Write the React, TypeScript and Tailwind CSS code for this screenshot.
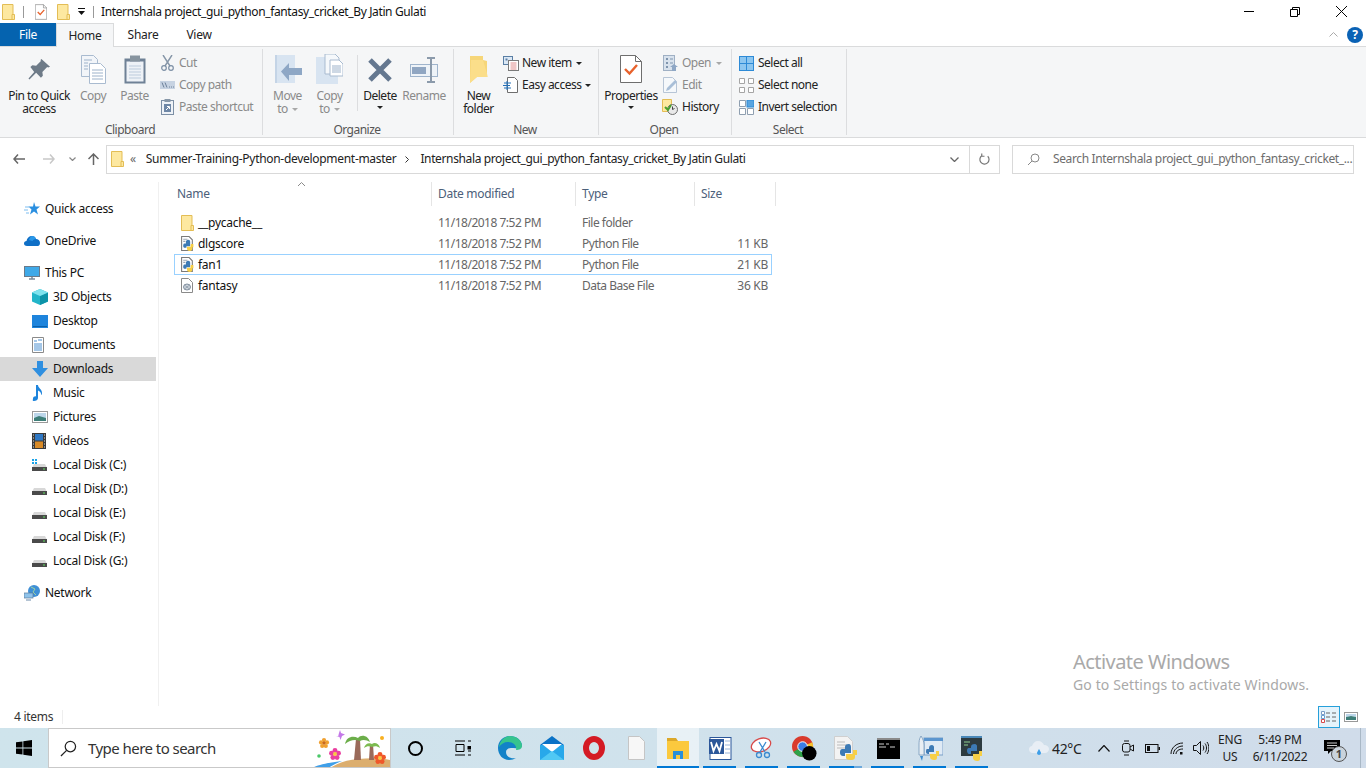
import type { ReactNode } from "react";

const F = "[font-family:'Noto_Sans',sans-serif]";

function Folder({ className = "w-[13px] h-[16px]" }: { className?: string }) {
  return (
    <svg viewBox="0 0 13 16" className={className}>
      <path d="M.5.5h10.5v15H.5z" fill="#fde8a0" stroke="#e3bd55" />
      <path d="M10 10.500h2.500v5H10z" fill="#fde8a0" stroke="#e3bd55" />
    </svg>
  );
}

function CheckDoc({ className }: { className: string }) {
  return (
    <svg viewBox="0 0 22 28" className={className}>
      <path d="M.5.5h15l6 6v21H.5z" fill="#fff" stroke="#6e6e6e" />
      <path d="M15.500.5v6h6" fill="none" stroke="#6e6e6e" />
      <path d="M5 14l4.500 4.500L17 10" fill="none" stroke="#e8622c" strokeWidth="2.400" />
    </svg>
  );
}

function PyFile() {
  return (
    <svg viewBox="0 0 12 14" className="w-[13px] h-[15px]">
      <path d="M.5.5h7l3 3v10H.5z" fill="#fff" stroke="#7a7a7a" />
      <path d="M2 3h4M2 5h2" stroke="#9aa5b1" />
      <path d="M7 3.500c-2 0-2.500 1-2.500 2V7H3C2 7 2 9 2 9.500S2.500 11 3.500 11H5V9.500h3.500V5.500c0-1-.5-2-1.500-2z" fill="#3d7ab5" />
      <path d="M8 14c2 0 2.500-1 2.500-2v-1.500h1V7.500H9V10H5.500v2c0 1 1 2 2.500 2z" fill="#f7cf47" />
    </svg>
  );
}

function DbFile() {
  return (
    <svg viewBox="0 0 12 15" className="w-[12px] h-[15px]">
      <path d="M.5.5h7l4 4v10H.5z" fill="#fff" stroke="#8a8a8a" />
      <ellipse cx="6" cy="9" rx="3.500" ry="3" fill="#cfd6dd" stroke="#8391a0" />
      <path d="M3.500 7l5 4M8.500 7l-5 4" stroke="#8391a0" strokeWidth=".7" />
    </svg>
  );
}

function Caret({ dim = false, className = "" }: { dim?: boolean; className?: string }) {
  return (
    <svg viewBox="0 0 6 3" className={`w-[6px] h-[3px] ${className}`}>
      <path d="M0 0h6L3 3z" fill={dim ? "#a8a8a8" : "#222"} />
    </svg>
  );
}

function Big({
  w,
  icon,
  lines,
  off = false,
  inlineCaret = false,
  underCaret = false,
}: {
  w: string;
  icon: ReactNode;
  lines: string[];
  off?: boolean;
  inlineCaret?: boolean;
  underCaret?: boolean;
}) {
  return (
    <div className={`${w} flex flex-col items-center shrink-0`}>
      <div className="h-[40px] flex items-center justify-center">{icon}</div>
      <div className={`text-center leading-[13px] whitespace-nowrap ${off ? "text-[#8a8a8a]" : "text-[#222]"}`}>
        {lines.map((l, i) => (
          <div key={l}>
            {l}
            {inlineCaret && i === lines.length - 1 && <Caret dim className="inline-block ml-[4px] align-middle" />}
          </div>
        ))}
        {underCaret && (
          <div className="flex justify-center mt-[4px]">
            <Caret />
          </div>
        )}
      </div>
    </div>
  );
}

function Small({
  icon,
  label,
  off = false,
  caret,
}: {
  icon: ReactNode;
  label: string;
  off?: boolean;
  caret?: ReactNode;
}) {
  return (
    <div className="h-[22px] flex items-center whitespace-nowrap">
      <div className="w-[19px] flex justify-start shrink-0">{icon}</div>
      <span className={off ? "text-[#8a8a8a]" : "text-[#222]"}>{label}</span>
      {caret}
    </div>
  );
}

function Group({ w, label, children }: { w: string; label: string; children: ReactNode }) {
  return (
    <div className={`${w} shrink-0 flex flex-col border-r border-[#dcdddf] h-[86px] mt-[2px]`}>
      <div className="flex-1 flex">{children}</div>
      <div className="h-[14px] pr-[2px] text-center text-[#555] leading-[17px]">{label}</div>
    </div>
  );
}

function Ribbon() {
  return (
    <div className="h-[92px] bg-[#f5f6f7] border-b border-t border-[#dadbdc] flex text-[12px] tracking-[-0.5px] shrink-0">
      <Group w="w-[263px]" label="Clipboard">
        <Big
          w="w-[78px]"
          lines={["Pin to Quick", "access"]}
          icon={
            <svg viewBox="0 0 24 24" className="w-[23px] h-[23px] mt-[1px]">
              <path d="M14 1l9 8-2 1-1-.500-5 5 .500 4-2 2-5-5-7 7-1-1 6-7-4-5 2-2 4 .500 5-5-.500-1z" fill="#6e7b88" />
            </svg>
          }
        />
        <Big
          w="w-[30px]"
          off
          lines={["Copy"]}
          icon={
            <svg viewBox="0 0 25 29" className="w-[25px] h-[29px]">
              <path d="M.5.5h12l4 4v17H.5z" fill="#f2f5f9" stroke="#a9bbd0" />
              <path d="M8.500 8.500h11l5 5v15h-16z" fill="#fff" stroke="#a9bbd0" />
              <path d="M3 5h8M3 8h4M3 11h4M3 14h4M11 15h11M11 18h11M11 21h11M11 24h11" stroke="#9db2ca" />
            </svg>
          }
        />
        <Big
          w="w-[53px]"
          off
          lines={["Paste"]}
          icon={
            <svg viewBox="0 0 22 29" className="w-[22px] h-[29px]">
              <rect x=".5" y="3.500" width="21" height="25" fill="#6f8196" />
              <rect x="2.500" y="6.500" width="17" height="20" fill="#eef2f7" />
              <rect x="6" y=".5" width="10" height="6" fill="#87949f" />
              <path d="M5 11h12M5 14h12M5 17h12M5 20h12M5 23h12" stroke="#bccbdc" />
            </svg>
          }
        />
        <div className="flex flex-col pt-[3px] -ml-[1px]">
          <Small
            off
            label="Cut"
            icon={
              <svg viewBox="0 0 13 16" className="w-[13px] h-[16px] ml-[1px]">
                <path d="M2 0l7 11M11 0L4 11" stroke="#8696a8" strokeWidth="1.400" />
                <circle cx="3" cy="13" r="2.300" fill="none" stroke="#7c8fa5" strokeWidth="1.200" />
                <circle cx="10" cy="13" r="2.300" fill="none" stroke="#7c8fa5" strokeWidth="1.200" />
              </svg>
            }
          />
          <Small
            off
            label="Copy path"
            icon={
              <svg viewBox="0 0 15 8" className="w-[15px] h-[8px]">
                <rect width="15" height="8" fill="#c7d3e2" />
                <path d="M2 1.500l2 5M5 1.500l2 5" stroke="#6d819a" />
                <path d="M9 6h1M11 6h1M13 6h1" stroke="#6d819a" />
              </svg>
            }
          />
          <Small
            off
            label="Paste shortcut"
            icon={
              <svg viewBox="0 0 13 16" className="w-[13px] h-[16px] ml-[1px]">
                <rect x=".5" y="1.500" width="12" height="14" fill="#eef2f7" stroke="#7c8fa5" />
                <rect x="3.500" y="0" width="6" height="3" fill="#8797a8" />
                <rect x="3" y="5" width="7" height="8" fill="#6e87a6" />
                <path d="M5 11l3-3M6 7.500h2.500V10" stroke="#fff" fill="none" />
              </svg>
            }
          />
        </div>
      </Group>

      <Group w="w-[191px]" label="Organize">
        <Big
          w="w-[49px]"
          off
          inlineCaret
          lines={["Move", "to"]}
          icon={
            <svg viewBox="0 0 27 28" className="w-[27px] h-[28px] ml-[2px]">
              <path d="M0 0h20v28H0z" fill="#d8e4f1" />
              <path d="M0 0h2v28H0z" fill="#c4d4e6" />
              <path d="M27 13v7H14v6L6 16.500 14 8v5z" fill="#8ea7c5" />
            </svg>
          }
        />
        <Big
          w="w-[35px]"
          off
          inlineCaret
          lines={["Copy", "to"]}
          icon={
            <svg viewBox="0 0 27 30" className="w-[27px] h-[30px]">
              <path d="M0 3h22v27H0z" fill="#d8e4f1" />
              <path d="M9 0h10l4 4v16H9z" fill="#f5f8fb" stroke="#a9bbd0" />
              <path d="M14 6h9l4 4v12H14z" fill="#fff" stroke="#a9bbd0" />
              <path d="M16 12h9M16 14h9M16 16h9M16 18h9" stroke="#9db2ca" />
            </svg>
          }
        />
        <div className="w-[1px] h-[56px] bg-[#dcdddf] ml-[10px] mt-[6px] shrink-0" />
        <Big
          w="w-[44px]"
          underCaret
          lines={["Delete"]}
          icon={
            <svg viewBox="0 0 26 26" className="w-[26px] h-[26px] mt-[1px]">
              <path d="M3 3l20 20M23 3L3 23" stroke="#64778f" strokeWidth="5" />
            </svg>
          }
        />
        <Big
          w="w-[44px]"
          off
          lines={["Rename"]}
          icon={
            <svg viewBox="0 0 28 26" className="w-[28px] h-[26px] mt-[1px]">
              <rect x=".5" y="7.500" width="27" height="12" fill="#eef3f8" stroke="#9fb4cc" />
              <rect x="2" y="10" width="14" height="7" fill="#90a6c2" />
              <path d="M17 1h8M21 1v24M17 25h8" stroke="#8b9aab" strokeWidth="2" fill="none" />
            </svg>
          }
        />
      </Group>

      <Group w="w-[145px]" label="New">
        <Big
          w="w-[49px]"
          lines={["New", "folder"]}
          icon={
            <svg viewBox="0 0 20 27" className="w-[20px] h-[27px]">
              <path d="M1 0h13v4l4 1v16H8l-7 6z" fill="#f6d679" />
              <path d="M14 4l5 17H8l-7 6 1-23z" fill="#fde08f" opacity=".8" />
            </svg>
          }
        />
        <div className="flex flex-col pt-[3px]">
          <Small
            label="New item"
            caret={<Caret className="ml-[4px]" />}
            icon={
              <svg viewBox="0 0 16 15" className="w-[16px] h-[15px]">
                <rect x=".5" y=".5" width="9" height="8" fill="#dbe8f5" stroke="#5a7fa5" />
                <path d="M2.500 2.500h2v2h-2z" fill="#5a7fa5" />
                <rect x="5.500" y="4.500" width="10" height="10" fill="#fff" stroke="#7a7a7a" />
                <path d="M7.500 7h6M7.500 9h6M7.500 11h6M7.500 13h6" stroke="#e08c8c" />
              </svg>
            }
          />
          <Small
            label="Easy access"
            caret={<Caret className="ml-[4px]" />}
            icon={
              <svg viewBox="0 0 15 16" className="w-[15px] h-[16px]">
                <path d="M4.500.5h7l3 3v12h-10z" fill="#fff" stroke="#6e6e6e" />
                <path d="M1 6h7M0 8.500h7M1 11h7" stroke="#2470b8" />
                <path d="M4 4v9" stroke="#2470b8" />
              </svg>
            }
          />
        </div>
      </Group>

      <Group w="w-[133px]" label="Open">
        <Big w="w-[64px]" underCaret lines={["Properties"]} icon={<CheckDoc className="w-[22px] h-[28px]" />} />
        <div className="flex flex-col pt-[3px]">
          <Small
            off
            label="Open"
            caret={<Caret dim className="ml-[5px]" />}
            icon={
              <svg viewBox="0 0 15 16" className="w-[15px] h-[16px]">
                <rect x=".5" y=".5" width="11" height="15" fill="#d8e2ed" stroke="#9fb0c4" />
                <path d="M3 3h2v2H3zM3 7h2v2H3zM3 11h2v2H3z" fill="#7f95ae" />
                <path d="M7 4h3M7 8h3" stroke="#7f95ae" />
                <path d="M11 9l4 3h-2v4h-4v-4H7z" fill="#8ea7c5" />
              </svg>
            }
          />
          <Small
            off
            label="Edit"
            icon={
              <svg viewBox="0 0 14 16" className="w-[14px] h-[16px]">
                <path d="M.5.5h9l4 4v11H.5z" fill="#f5f8fb" stroke="#b7c5d6" />
                <path d="M3 14l1-3 8-8 2 2-8 8z" fill="#a9bfd8" />
              </svg>
            }
          />
          <Small
            label="History"
            icon={
              <svg viewBox="0 0 16 16" className="w-[16px] h-[16px] -ml-[1px]">
                <path d="M.5.5h9v12h-9z" fill="#fde8a0" stroke="#e3bd55" />
                <circle cx="10.500" cy="10.500" r="5" fill="#e9e9e9" stroke="#6e6e6e" />
                <path d="M10.500 7.500v3l2-1" stroke="#444" fill="none" />
                <path d="M3 8l3 3 3-5" stroke="#4aa02c" strokeWidth="2" fill="none" />
              </svg>
            }
          />
        </div>
      </Group>

      <Group w="w-[115px]" label="Select">
        <div className="flex flex-col pt-[3px] pl-[7px]">
          <Small
            label="Select all"
            icon={
              <svg viewBox="0 0 15 15" className="w-[15px] h-[15px]">
                <rect width="15" height="15" fill="#2d8ad6" />
                <path d="M1 1h6v6H1zM8 1h6v6H8zM1 8h6v6H1zM8 8h6v6H8z" fill="#8cc6f0" />
              </svg>
            }
          />
          <Small
            label="Select none"
            icon={
              <svg viewBox="0 0 15 15" className="w-[15px] h-[15px]">
                <path d="M.5.5h5v5h-5zM9.500.5h5v5h-5zM.5 9.500h5v5h-5zM9.500 9.500h5v5h-5z" fill="#fff" stroke="#a5a5a5" />
              </svg>
            }
          />
          <Small
            label="Invert selection"
            icon={
              <svg viewBox="0 0 15 15" className="w-[15px] h-[15px]">
                <path d="M.5 8.500h6v6h-6zM8.500 8.500h6v6h-6zM.5.5h6v6h-6z" fill="#fff" stroke="#8f9fb0" />
                <rect x="8" y="0" width="7" height="7" fill="#5aa5e0" stroke="#2d8ad6" />
              </svg>
            }
          />
        </div>
      </Group>
    </div>
  );
}

const tree = [
  { label: "3D Objects", icon: <svg viewBox="0 0 16 16" className="w-4 h-4"><path d="M8 0l8 3.500v9L8 16 0 12.500v-9z" fill="#22b5c9" /><path d="M8 7v9l8-3.500v-9z" fill="#0d93a8" /><path d="M8 0l8 3.500L8 7 0 3.500z" fill="#7fe3ee" /></svg> },
  { label: "Desktop", icon: <svg viewBox="0 0 16 13" className="w-4 h-[13px]"><rect width="16" height="13" fill="#1e84dc" /><rect x="1" y="11" width="14" height="1" fill="#0c5fa8" /></svg> },
  { label: "Documents", icon: <svg viewBox="0 0 12 16" className="w-3 h-4"><path d="M.5.5h11v15H.5z" fill="#fff" stroke="#8a8a8a" /><path d="M2 4h3M6 3h4M2 7h8M2 9h8M2 11h8M2 13h8" stroke="#4a8fd0" /></svg> },
  { label: "Downloads", icon: <svg viewBox="0 0 16 16" className="w-4 h-4"><path d="M5 0h6v7h5l-8 9-8-9h5z" fill="#2f8fe0" /></svg> },
  { label: "Music", icon: <svg viewBox="0 0 12 16" className="w-3 h-4"><path d="M4 0h2c0 3 4 4 4 8 0 1-.5 2-1 2 .5-2-1-4-3-4.500V13c0 2-2 3-4 3S1 15 1 13.500 3 11 4 11.500z" fill="#1e84dc" /></svg> },
  { label: "Pictures", icon: <svg viewBox="0 0 16 12" className="w-4 h-3"><rect x=".5" y=".5" width="15" height="11" fill="#fff" stroke="#9a9a9a" /><rect x="2" y="2" width="12" height="8" fill="#bcd6ea" /><path d="M2 7l5-2 7 2v3H2z" fill="#3d7e78" /></svg> },
  { label: "Videos", icon: <svg viewBox="0 0 14 16" className="w-[14px] h-4"><rect width="14" height="16" fill="#3a3a3a" /><rect x="3" y="1" width="8" height="6.500" fill="#2f78c4" /><rect x="3" y="8.500" width="8" height="6.500" fill="#d98a26" /><path d="M1 2h1M1 5h1M1 8h1M1 11h1M1 14h1M12 2h1M12 5h1M12 8h1M12 11h1M12 14h1" stroke="#ddd" /></svg> },
];

function Disk({ sys = false }: { sys?: boolean }) {
  return (
    <svg viewBox="0 0 15 12" className="w-[15px] h-[12px]">
      {sys && <path d="M0 0h2v2H0zM3 0h2v2H3zM0 3h2v2H0zM3 3h2v2H3z" fill="#19a3e8" />}
      <path d="M2 5h11l2 4H0z" fill="#d8d8d8" />
      <rect y="8" width="15" height="4" fill="#4a4a4a" />
      <rect x="11" y="9.500" width="2" height="1" fill="#5fe05f" />
    </svg>
  );
}

const disks = ["C", "D", "E", "F", "G"];

function NavRow({ icon, label, sub = false, active = false }: { icon: ReactNode; label: string; sub?: boolean; active?: boolean }) {
  return (
    <div className={`h-[24px] w-[156px] flex items-center ${active ? "bg-[#d9d9d9]" : ""}`}>
      <div className={`${sub ? "ml-[32px] w-[21px]" : "ml-[24px] w-[21px]"} flex items-center shrink-0`}>{icon}</div>
      <span className="text-[#111]">{label}</span>
    </div>
  );
}

function NavPane() {
  return (
    <div className="w-[159px] shrink-0 border-r border-[#f0f0f0] pt-[15px] flex flex-col text-[12px] tracking-[-0.28px]">
      <NavRow
        label="Quick access"
        icon={
          <svg viewBox="0 0 16 16" className="w-4 h-4">
            <path d="M10 1l1.500 4.500H16l-3.500 3 1.500 5-4-3-4 3 1.500-5-3-3h4.500z" fill="#2a8fe0" />
            <path d="M1 6h4M0 9h4M2 12h3" stroke="#7dbdf0" />
          </svg>
        }
      />
      <div className="h-[8px]" />
      <NavRow
        label="OneDrive"
        icon={
          <svg viewBox="0 0 16 10" className="w-4 h-[10px]">
            <path d="M3 10C1 10 0 9 0 7.500S1 5 2.500 5C3 2 5 0 8 0c2 0 3.500 1 4 3 2 0 4 1.500 4 4s-1.500 3-3 3z" fill="#0f6fc6" />
            <path d="M8 0c2 0 3.500 1 4 3-2 0-3 1-3.500 2L5 4C5.500 2 6.500.5 8 0z" fill="#2a97e8" />
          </svg>
        }
      />
      <div className="h-[8px]" />
      <NavRow
        label="This PC"
        icon={
          <svg viewBox="0 0 16 15" className="w-4 h-[15px]">
            <rect x=".5" y=".5" width="15" height="10" fill="#3fa9e8" stroke="#6a7a8a" />
            <path d="M5 13h6M8 11v2" stroke="#7a8a9a" strokeWidth="1.500" />
          </svg>
        }
      />
      {tree.map((t) => (
        <NavRow key={t.label} sub icon={t.icon} label={t.label} active={t.label === "Downloads"} />
      ))}
      {disks.map((d) => (
        <NavRow key={d} sub icon={<Disk sys={d === "C"} />} label={`Local Disk (${d}:)`} />
      ))}
      <div className="h-[8px]" />
      <NavRow
        label="Network"
        icon={
          <svg viewBox="0 0 16 16" className="w-4 h-4">
            <circle cx="10" cy="6" r="6" fill="#3f8fd6" />
            <path d="M7 2l4 2-2 3 3 3" stroke="#9fd3a0" fill="none" />
            <rect x="0" y="8" width="9" height="5" fill="#8fc3ea" stroke="#5a7a9a" strokeWidth=".7" />
            <path d="M2 15h5" stroke="#6a8aaa" />
          </svg>
        }
      />
    </div>
  );
}

const files = [
  { name: "__pycache__", type: "File folder", size: "", icon: <Folder /> },
  { name: "dlgscore", type: "Python File", size: "11 KB", icon: <PyFile /> },
  { name: "fan1", type: "Python File", size: "21 KB", icon: <PyFile />, sel: true },
  { name: "fantasy", type: "Data Base File", size: "36 KB", icon: <DbFile /> },
];

function FileList() {
  return (
    <div className="flex-1 relative text-[12px] tracking-[-0.28px]">
      <div className="h-[24px] flex text-[#4c607a]">
        <div className="w-[273px] border-r border-[#e5e5e5] pl-[18px] leading-[24px]">Name</div>
        <div className="w-[144px] border-r border-[#e5e5e5] pl-[6px] leading-[24px]">Date modified</div>
        <div className="w-[119px] border-r border-[#e5e5e5] pl-[6px] leading-[24px]">Type</div>
        <div className="w-[81px] border-r border-[#e5e5e5] pl-[6px] leading-[24px]">Size</div>
      </div>
      <svg viewBox="0 0 7 4" className="w-[7px] h-[4px] absolute left-[139px] top-0">
        <path d="M0 4l3.500-3.500L7 4" fill="none" stroke="#8a8a8a" />
      </svg>
      <div className="pt-[6px] pl-[15px]">
        {files.map((f) => (
          <div
            key={f.name}
            className={`h-[21px] w-[598px] flex items-center ${f.sel ? "border border-[#99d1ff]" : "border border-transparent"}`}
          >
            <div className="w-[257px] pl-[6px] flex items-center shrink-0">
              <div className="w-[17px] shrink-0 flex">{f.icon}</div>
              <span className="text-[#111]">{f.name}</span>
            </div>
            <div className="w-[144px] pl-[6px] text-[#666] tracking-[-0.5px] shrink-0">11/18/2018 7:52 PM</div>
            <div className="w-[119px] pl-[6px] text-[#666] tracking-[-0.5px] shrink-0">{f.type}</div>
            <div className="w-[73px] text-right text-[#666] shrink-0">{f.size}</div>
          </div>
        ))}
      </div>
    </div>
  );
}

function TaskBtn({ children, on = false, part = false }: { children: ReactNode; on?: boolean; part?: boolean }) {
  return (
    <div className={`w-[42px] h-full relative flex items-center justify-center shrink-0 ${on ? "bg-white/50" : ""}`}>
      {children}
      <div className={`absolute bottom-0 h-[2px] bg-[#0078d4] ${on ? "left-0 right-0" : "left-[4px] right-[5px]"}`} />
      {part && <div className="absolute bottom-0 h-[2px] right-[5px] w-[8px] bg-[#6ca9dc]" />}
    </div>
  );
}

function Flower({ x, y, r, petal, core }: { x: number; y: number; r: number; petal: string; core: string }) {
  return (
    <g>
      <circle cx={x} cy={y - r} r={r * 0.7} fill={petal} />
      <circle cx={x + r} cy={y - r * 0.2} r={r * 0.7} fill={petal} />
      <circle cx={x + r * 0.6} cy={y + r} r={r * 0.7} fill={petal} />
      <circle cx={x - r * 0.6} cy={y + r} r={r * 0.7} fill={petal} />
      <circle cx={x - r} cy={y - r * 0.2} r={r * 0.7} fill={petal} />
      <circle cx={x} cy={y} r={r * 0.55} fill={core} />
    </g>
  );
}

function Taskbar() {
  return (
    <div className="h-[40px] bg-gradient-to-r from-[#cfe4ec] via-[#d0e2ec] to-[#d0dcea] flex items-center text-[#111] shrink-0">
      <div className="w-[48px] flex justify-center shrink-0">
        <svg viewBox="0 0 16 16" className="w-4 h-4">
          <path d="M0 2.300l6.500-.9v6.200H0zM7.300 1.300L16 0v7.600H7.300zM0 8.400h6.500v6.200L0 13.700zM7.300 8.400H16V16l-8.700-1.300z" fill="#000" />
        </svg>
      </div>
      <div className="w-[343px] h-full shrink-0 bg-white border border-[#c9c9c9] flex items-center relative overflow-hidden">
        <svg viewBox="0 0 18 18" className="w-[17px] h-[17px] ml-[11px] shrink-0">
          <circle cx="11" cy="7" r="5.500" fill="none" stroke="#222" strokeWidth="1.300" />
          <path d="M7 11l-6 6" stroke="#222" strokeWidth="1.300" />
        </svg>
        <span className="ml-[11px] text-[15px] tracking-[-0.55px] text-[#333]">Type here to search</span>
        <svg viewBox="0 0 76 39" className="absolute right-0 top-0 w-[76px] h-[39px]">
          <path d="M16 39c8-5 16-8 28-9 12-1 24-1 32 1v8z" fill="#dcae6e" />
          <path d="M-2 39c6-3 14-5 30-7-6 2-10 5-14 7z" fill="#3f9fe8" />
          <path d="M40 31l2-21h4l1 21z" fill="#9a6a5a" />
          <path d="M55 31l1-16h3l1 16z" fill="#9a6a5a" />
          <path d="M31 15c1-7 8-9 13-6 3-4 10-3 12 4-3-2-7-3-10-1-5-2-10-1-15 3z" fill="#6cae4a" />
          <path d="M50 19c1-4 5-6 8-4 2-2 7-1 8 4-3-2-5-2-8-1-3-1-5-1-8 1z" fill="#7cba50" />
          <Flower x={21} y={25} r={3.500} petal="#ea3fa0" core="#f8c840" />
          <Flower x={10} y={14} r={3} petal="#f0a030" core="#c86a20" />
          <Flower x={66} y={29} r={3.500} petal="#f0582a" core="#f8c840" />
          <path d="M24 8l1-4 1-3 1 3 4 1.500-3 1.500-1.500 4-1-3-3.500-1z" fill="#c478e8" />
          <circle cx="68" cy="9" r="2" fill="#f8b020" />
          <circle cx="5" cy="27" r="1.800" fill="#4ac868" />
        </svg>
      </div>
      <div className="w-[48px] flex justify-center shrink-0">
        <div className="w-[15px] h-[15px] rounded-full border-[2.5px] border-black" />
      </div>
      <div className="w-[50px] flex justify-center shrink-0">
        <svg viewBox="0 0 16 16" className="w-4 h-4 -ml-[3px]">
          <path d="M0 1h10M0 15h10M1 4.500h8v7H1z" fill="none" stroke="#000" />
          <path d="M13 1h3M13 15h3M13 11h3" stroke="#000" />
          <rect x="12.500" y="6" width="3.500" height="3.500" fill="#000" />
        </svg>
      </div>
      <div className="w-[42px] flex justify-center shrink-0">
        <svg viewBox="0 0 24 24" className="w-[24px] h-[24px]">
          <path d="M12 0C5 0 0 5 0 12c0 7 5 12 11 12 3 0 5-1 7-2-5 1-10-1-10-6 0-2 2-4 5-4 4 0 9 1 11-2C24 4 18 0 12 0z" fill="#1282c8" />
          <path d="M12 0c6 0 12 4 12 10 0 3-3 4-6 4 1-4-2-8-8-8-4 0-7 2-9 5C2 5 6 0 12 0z" fill="#36c48e" />
        </svg>
      </div>
      <div className="w-[42px] flex justify-center shrink-0">
        <svg viewBox="0 0 24 24" className="w-[24px] h-[24px]">
          <path d="M0 9l12-9 12 9v15H0z" fill="#0a72c6" />
          <path d="M0 9h24v15H0z" fill="#28a8ea" />
          <path d="M2 8h20l-10 8z" fill="#fff" />
          <path d="M0 24l12-9 12 9z" fill="#50c8f4" />
        </svg>
      </div>
      <div className="w-[42px] flex justify-center shrink-0">
        <div className="w-[22px] h-[24px] rounded-[50%] border-[6px] border-[#d41a24]" />
      </div>
      <div className="w-[42px] flex justify-center shrink-0">
        <svg viewBox="0 0 17 24" className="w-[17px] h-[24px]">
          <path d="M.5.5h11l5 5v18H.5z" fill="#f7f7f7" stroke="#c5c5c5" />
        </svg>
      </div>
      <TaskBtn on>
        <svg viewBox="0 0 22 21" className="w-[22px] h-[21px]">
          <path d="M0 0h9l2 3h11v6H0z" fill="#dca82a" />
          <path d="M0 3h22v18H0z" fill="#fbc93e" />
          <path d="M6 13h10v8h-3v-4H9v4H6z" fill="#2a8fd8" />
        </svg>
      </TaskBtn>
      <TaskBtn>
        <svg viewBox="0 0 23 23" className="w-[23px] h-[23px]">
          <rect x="1" y=".5" width="21" height="22" fill="#fff" stroke="#2b579a" />
          <path d="M16 4h5M16 8h5M16 12h5M16 16h5" stroke="#9ab5da" />
          <rect y="2" width="15" height="15" fill="#2b579a" />
          <path d="M2 5l2.500 9 3-7 3 7L13 5" fill="none" stroke="#fff" strokeWidth="1.800" />
        </svg>
      </TaskBtn>
      <TaskBtn>
        <svg viewBox="0 0 24 24" className="w-[24px] h-[24px]">
          <ellipse cx="11" cy="9" rx="10" ry="6.500" fill="#fff" stroke="#d84a4a" strokeWidth="1.300" transform="rotate(-20 11 9)" />
          <path d="M9 6l6 10M16 6l-6 10" stroke="#3a8ad0" strokeWidth="1.300" />
          <circle cx="9" cy="19" r="2.500" fill="none" stroke="#3a8ad0" strokeWidth="1.300" />
          <circle cx="17" cy="19" r="2.500" fill="none" stroke="#3a8ad0" strokeWidth="1.300" />
        </svg>
      </TaskBtn>
      <TaskBtn>
        <svg viewBox="0 0 26 26" className="w-[25px] h-[25px]">
          <circle cx="11" cy="11" r="11" fill="#d93a2c" />
          <path d="M11 11L1.500 16.500A11 11 0 0 0 14 21.500z" fill="#2ea24a" />
          <path d="M21 6.500A11 11 0 0 1 14 21.500L11 11z" fill="#f6c32c" />
          <circle cx="11" cy="11" r="5" fill="#3b7de6" stroke="#fff" />
          <circle cx="18" cy="18" r="7.500" fill="#000" />
        </svg>
      </TaskBtn>
      <TaskBtn part>
        <svg viewBox="0 0 24 25" className="w-[24px] h-[25px]">
          <path d="M.5.5h13l5 5v18H.5z" fill="#f3f3f3" stroke="#cfcfcf" />
          <path d="M3 6h8M3 9h10M3 12h8" stroke="#bbb" />
          <path d="M15 8c-3 0-4 1-4 3v2H8c-2 0-2 3-2 4s1 3 3 3h2v-3h6v-6c0-2-1-3-2-3z" fill="#3d7ab5" />
          <path d="M17 24c3 0 4-1 4-3v-2h2v-5h-4v4h-7v4c0 1 2 2 5 2z" fill="#f7cf47" />
        </svg>
      </TaskBtn>
      <TaskBtn>
        <svg viewBox="0 0 23 21" className="w-[23px] h-[21px]">
          <rect width="23" height="21" fill="#000" />
          <rect width="23" height="2" fill="#8a8a8a" />
          <path d="M2 6h5M9 6h3M2 9h7M13 9h5" stroke="#cfcfcf" />
        </svg>
      </TaskBtn>
      <TaskBtn>
        <svg viewBox="0 0 26 25" className="w-[26px] h-[25px]">
          <rect x="7" y="2" width="19" height="17" fill="#dfeaf5" stroke="#7aa0c8" />
          <rect x="7" y="2" width="19" height="3" fill="#5c96cf" />
          <path d="M4 0c2 3 3 6 3 9v10H2V9c0-3 0-6 2-9z" fill="#e9eef3" stroke="#6a8fb5" strokeWidth=".7" />
          <path d="M3 20h3l-1 5z" fill="#3a8ad0" />
          <path d="M15 9c-2 0-3 1-3 3v1h-2c-1 0-1 2-1 3s1 2 2 2h1v-2h5v-5c0-1-1-2-2-2z" fill="#3d7ab5" />
          <path d="M17 24c3 0 3-1 3-3v-1h2v-5h-3v3h-6v3c0 2 2 3 4 3z" fill="#f7cf47" />
        </svg>
      </TaskBtn>
      <TaskBtn>
        <svg viewBox="0 0 23 25" className="w-[23px] h-[25px]">
          <rect width="21" height="20" fill="#2d3b40" />
          <rect width="21" height="2" fill="#4a88b8" />
          <path d="M3 6h6M3 9h4" stroke="#8fd08f" />
          <path d="M14 8c-3 0-4 1-4 3v1H8c-2 0-2 2-2 3s1 3 2 3h2v-3h6v-5c0-1-1-2-2-2z" fill="#3d7ab5" />
          <path d="M16 25c3 0 3-1 3-3v-2h2v-5h-3v3h-6v4c0 2 2 3 4 3z" fill="#f7cf47" />
        </svg>
      </TaskBtn>

      <div className="w-[30px] shrink-0" />
      <div className="w-[28px] flex justify-center shrink-0">
        <svg viewBox="0 0 20 16" className="w-[20px] h-[16px] ml-[3px]">
          <path d="M4 13c-3 0-4-2-4-4s2-3 3-3c1-3 3-5 6-5s5 2 6 4c3 0 5 2 5 4s-2 4-4 4z" fill="#e8eef5" />
          <path d="M10 9c1 2 2 3 2 4s-1 2-2 2-2-1-2-2 1-2 2-4z" fill="#3f9fe8" />
        </svg>
      </div>
      <div className="w-[41px] shrink-0 pl-[1px] text-[14px] tracking-[-0.35px] text-[#222]">42°C</div>
      <div className="w-[24px] flex justify-center shrink-0">
        <svg viewBox="0 0 12 7" className="w-[12px] h-[7px]">
          <path d="M.5 6.500l5.500-6 5.500 6" fill="none" stroke="#111" strokeWidth="1.200" />
        </svg>
      </div>
      <div className="w-[24px] flex justify-center shrink-0">
        <svg viewBox="0 0 12 16" className="w-[12px] h-[16px]">
          <rect x=".5" y="3.500" width="7.500" height="8.500" rx="2" fill="none" stroke="#111" />
          <path d="M8 7l3.500-2v6L8 9M2 1h5M2 15h5" fill="none" stroke="#111" />
        </svg>
      </div>
      <div className="w-[24px] flex justify-center shrink-0">
        <svg viewBox="0 0 15 9" className="w-[15px] h-[9px]">
          <rect x=".5" y=".5" width="12.500" height="8" fill="none" stroke="#111" />
          <rect x="2" y="2" width="3" height="5" fill="#111" />
          <rect x="13.500" y="3" width="1.500" height="3" fill="#111" />
        </svg>
      </div>
      <div className="w-[25px] flex justify-center shrink-0">
        <svg viewBox="0 0 14 13" className="w-[14px] h-[13px]">
          <path d="M1 12C1 6 6 1 13 1M3.500 12c0-4 4-8 9.500-8M6 12c0-3 3-5 7-5" fill="none" stroke="#111" />
          <rect x="10" y="10" width="2.500" height="2.500" fill="#111" />
        </svg>
      </div>
      <div className="w-[23px] flex justify-center shrink-0">
        <svg viewBox="0 0 16 14" className="w-[16px] h-[14px]">
          <path d="M.5 4.500h3l4-4v13l-4-4h-3z" fill="none" stroke="#111" />
          <path d="M10 4.500c1 1.500 1 3.500 0 5M12 2.500c2 2.500 2 6.500 0 9M14 1c2.500 3.500 2.500 8.500 0 12" fill="none" stroke="#111" />
        </svg>
      </div>
      <div className="w-[36px] shrink-0 text-center text-[12px] tracking-[-0.25px] leading-[17px] text-[#222]">
        <div>ENG</div>
        <div>US</div>
      </div>
      <div className="w-[64px] shrink-0 text-center text-[12px] tracking-[-0.25px] leading-[17px] text-[#222]">
        <div>5:49 PM</div>
        <div>6/11/2022</div>
      </div>
      <div className="w-[40px] flex justify-center shrink-0 relative">
        <svg viewBox="0 0 16 14" className="w-[16px] h-[14px] -mt-[3px]">
          <path d="M0 0h16v11H7l-3 3v-3H0z" fill="#000" />
          <path d="M3 3h10M3 5.500h10M3 8h7" stroke="#fff" strokeWidth=".8" />
        </svg>
        <div className="absolute left-[19px] top-[3px] w-[16px] h-[16px] rounded-full bg-[#c9d3dc] border border-[#555] text-[11px] font-bold leading-[14px] text-center text-[#444]">
          1
        </div>
      </div>
      <div className="w-[1px] h-full ml-[8px] bg-[#a9b8c6]" />
    </div>
  );
}

export default function App() {
  return (
    <div className={`${F} relative w-[1366px] h-[768px] overflow-hidden bg-white flex flex-col`}>
      {/* title bar */}
      <div className="h-[23px] flex items-center text-[12px] tracking-[-0.37px] text-[#111] shrink-0">
        <div className="ml-[2px] flex"><Folder /></div>
        <div className="w-[1px] h-[12px] bg-[#999] ml-[8px]" />
        <div className="ml-[11px] flex"><CheckDoc className="w-[12px] h-[16px]" /></div>
        <div className="ml-[10px] flex"><Folder /></div>
        <svg viewBox="0 0 7 7" className="w-[7px] h-[7px] ml-[8px]">
          <path d="M0 0h7v1H0zM0 3h7L3.500 7z" fill="#111" />
        </svg>
        <div className="w-[1px] h-[12px] bg-[#999] ml-[8px]" />
        <span className="ml-[7px]">Internshala project_gui_python_fantasy_cricket_By Jatin Gulati</span>
        <div className="ml-auto flex items-center pr-[2px]">
          <div className="w-[46px] flex justify-center">
            <div className="w-[10px] h-[1px] bg-black" />
          </div>
          <div className="w-[46px] flex justify-center">
            <svg viewBox="0 0 10 10" className="w-[10px] h-[10px]">
              <path d="M.5 2.500h7v7h-7zM2.500 2.500v-2h7v7h-2" fill="none" stroke="#000" />
            </svg>
          </div>
          <div className="w-[46px] flex justify-center">
            <svg viewBox="0 0 10 10" className="w-[11px] h-[11px]">
              <path d="M0 0l10 10M10 0L0 10" stroke="#000" strokeWidth=".9" />
            </svg>
          </div>
        </div>
      </div>
      {/* tabs */}
      <div className="h-[23px] flex items-stretch text-[12px] tracking-[-0.28px] shrink-0">
        <div className="w-[56px] bg-[#0563af] text-white flex items-center justify-center">File</div>
        <div className="w-[58px] bg-[#f5f6f7] border-x border-t border-[#dadbdc] -mb-[1px] relative z-10 flex items-center justify-center text-[#222]">Home</div>
        <div className="w-[58px] flex items-center justify-center text-[#222]">Share</div>
        <div className="w-[54px] flex items-center justify-center text-[#222]">View</div>
        <div className="ml-auto flex items-center gap-[9px] pr-[3px]">
          <svg viewBox="0 0 9 5" className="w-[9px] h-[5px]">
            <path d="M.5 4.500L4.500.5l4 4" fill="none" stroke="#aaa" />
          </svg>
          <div className="w-[16px] h-[16px] rounded-full bg-[#0a62b5] text-white text-[12px] font-bold leading-[16px] text-center">?</div>
        </div>
      </div>
      <Ribbon />
      {/* address row */}
      <div className="h-[44px] pb-[2px] flex items-center text-[12px] tracking-[-0.28px] shrink-0">
        <svg viewBox="0 0 12 10" className="w-[12px] h-[10px] ml-[13px]">
          <path d="M5 .5L1 5l4 4.500M1 5h11" fill="none" stroke="#666" strokeWidth="1.500" />
        </svg>
        <svg viewBox="0 0 12 10" className="w-[12px] h-[10px] ml-[18px]">
          <path d="M7 .5L11 5 7 9.500M11 5H0" fill="none" stroke="#c8c8c8" strokeWidth="1.500" />
        </svg>
        <svg viewBox="0 0 7 4" className="w-[7px] h-[4px] ml-[14px]">
          <path d="M.5.5L3.500 3.500 6.500.5" fill="none" stroke="#888" strokeWidth="1.200" />
        </svg>
        <svg viewBox="0 0 11 12" className="w-[11px] h-[12px] ml-[12px]">
          <path d="M.5 6L5.500 1l5 5M5.500 1v11" fill="none" stroke="#666" strokeWidth="1.500" />
        </svg>
        <div className="ml-[7px] w-[894px] h-[29px] border border-[#d9d9d9] flex items-center">
          <div className="ml-[4px] flex"><Folder /></div>
          <span className="ml-[6px] text-[#666]">«</span>
          <span className="ml-[10px] text-[#222] tracking-[-0.3px]">Summer-Training-Python-development-master</span>
          <svg viewBox="0 0 4 7" className="w-[4px] h-[7px] ml-[9px] mr-[11px]">
            <path d="M.5.5l3 3-3 3" fill="none" stroke="#333" />
          </svg>
          <span className="text-[#222] tracking-[-0.37px]">Internshala project_gui_python_fantasy_cricket_By Jatin Gulati</span>
          <svg viewBox="0 0 9 5" className="w-[9px] h-[5px] ml-auto mr-[10px]">
            <path d="M.5.5l4 4 4-4" fill="none" stroke="#666" strokeWidth="1.300" />
          </svg>
          <div className="w-[30px] h-full border-l border-[#d9d9d9] flex items-center justify-center">
            <svg viewBox="0 0 12 12" className="w-[11px] h-[12px]">
              <path d="M3 2.500A5 5 0 1 0 9.500 3M3 0v3h3" fill="none" stroke="#777" strokeWidth="1.300" />
            </svg>
          </div>
        </div>
        <div className="ml-[12px] w-[342px] h-[29px] border border-[#d9d9d9] flex items-center">
          <svg viewBox="0 0 13 13" className="w-[13px] h-[13px] ml-[14px]">
            <circle cx="8" cy="5" r="4" fill="none" stroke="#888" />
            <path d="M5 8l-4 4" stroke="#888" />
          </svg>
          <span className="ml-[13px] text-[#6d6d6d] whitespace-nowrap tracking-[-0.37px]">Search Internshala project_gui_python_fantasy_cricket_...</span>
        </div>
      </div>
      {/* panes */}
      <div className="flex-1 flex min-h-0">
        <NavPane />
        <FileList />
      </div>
      {/* status */}
      <div className="h-[22px] flex items-center text-[12px] tracking-[-0.28px] text-[#333] shrink-0">
        <span className="ml-[14px] w-[48px]">4 items</span>
        <div className="w-[1px] h-[14px] bg-[#eee]" />
        <div className="ml-auto flex items-center pr-[4px]">
          <div className="w-[22px] h-[22px] bg-[#e5f3fb] border border-[#26a0da] flex items-center justify-center">
            <svg viewBox="0 0 16 12" className="w-[16px] h-[12px]">
              <path d="M.5.5h3v3h-3z" fill="#fff" stroke="#7a9cc6" />
              <path d="M.5 4.500h3v3h-3z" fill="#fff" stroke="#6a9ed0" />
              <path d="M.5 8.500h3v3h-3z" fill="#fff" stroke="#d84a4a" />
              <path d="M5 2h4M11 2h4M5 6h4M11 6h4M5 10h4M11 10h4" stroke="#666" />
            </svg>
          </div>
          <div className="w-[22px] flex justify-center">
            <svg viewBox="0 0 14 10" className="w-[14px] h-[10px]">
              <rect x=".5" y=".5" width="13" height="9" fill="#fff" stroke="#999" />
              <path d="M2 2h10v3l-5-1-5 1z" fill="#bcd6ea" />
              <path d="M2 5l5-1 5 1v3H2z" fill="#3d7e78" />
            </svg>
          </div>
        </div>
      </div>
      <Taskbar />
      {/* watermark */}
      <div className="absolute left-[1073px] top-[649px] text-[#a9a9a9] pointer-events-none whitespace-nowrap">
        <div className="text-[20px] leading-[26px] tracking-[-0.55px]">Activate Windows</div>
        <div className="text-[14px] leading-[19px] tracking-[0.12px]">Go to Settings to activate Windows.</div>
      </div>
    </div>
  );
}
